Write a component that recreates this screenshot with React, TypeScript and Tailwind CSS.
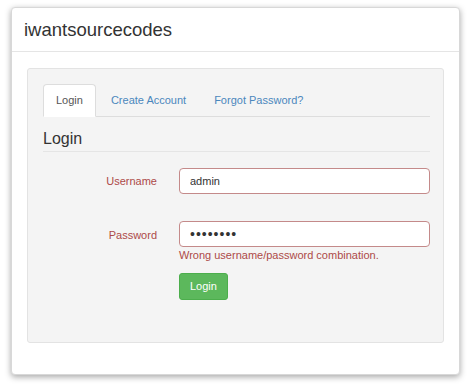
import { useState } from "react";

const tabs = ["Login", "Create Account", "Forgot Password?"];

export default function App() {
  const [active, setActive] = useState("Login");

  return (
    <div className="w-[474px] h-[390px] bg-white pt-[7px] pl-[11px] font-['Liberation_Sans',Arial,sans-serif]">
      <div className="w-[449px] h-[368px] bg-white rounded-[4px] border border-[#d8d8d8] shadow-[0_2px_6px_rgba(0,0,0,0.35)] flex flex-col">
        {/* header */}
        <div className="h-[44px] flex items-center px-[12px] border-b border-[#e5e5e5]">
          <h1 className="text-[18.5px] text-[#333]">iwantsourcecodes</h1>
        </div>

        {/* body */}
        <div className="pt-[16px] px-[15px]">
          <div className="h-[275px] bg-[#f4f4f4] border border-[#e3e3e3] rounded-[3px] pt-[15px] pl-[15px] pr-[13px]">
            {/* tabs */}
            <ul className="flex border-b border-[#ddd] text-[11px]">
              {tabs.map((t) => (
                <li key={t} className="mr-[2px] -mb-px">
                  <button
                    onClick={() => setActive(t)}
                    className={`h-[33px] px-[12px] rounded-t-[4px] border ${
                      active === t
                        ? "bg-white border-[#ddd] border-b-white text-[#555]"
                        : "border-transparent text-[#4b87bd]"
                    }`}
                  >
                    {t}
                  </button>
                </li>
              ))}
            </ul>

            {/* legend */}
            <h2 className="mt-[13px] pb-[3px] text-[16px] leading-[18px] text-[#333] border-b border-[#e5e5e5]">Login</h2>

            {/* form */}
            <form className="mt-[16px] flex flex-col text-[11px]" onSubmit={(e) => e.preventDefault()}>
              <div className="flex items-center">
                <label className="w-[114px] text-right text-[#ad4a48]">Username</label>
                <input
                  readOnly
                  value="admin"
                  className="ml-[22px] w-[251px] h-[26px] px-[10px] bg-white text-[#333] text-[11px] border border-[#c48a8a] rounded-[4px] outline-none"
                />
              </div>

              <div className="flex items-center mt-[27px]">
                <label className="w-[114px] text-right text-[#ad4a48] pt-[2px]">Password</label>
                <div className="ml-[22px] w-[251px] h-[26px] px-[10px] bg-white text-[#333] text-[14px] tracking-[1px] border border-[#c48a8a] rounded-[4px] flex items-center">
                  ••••••••
                </div>
              </div>

              <div className="ml-[136px] flex flex-col items-start">
                <span className="mt-[1px] leading-[14px] text-[#ad4a48]">Wrong username/password combination.</span>
                <button
                  type="submit"
                  className="mt-[11px] h-[27px] px-[10px] bg-[#5cb85c] border border-[#4cae4c] rounded-[3px] text-white text-[11px]"
                >
                  Login
                </button>
              </div>
            </form>
          </div>
        </div>
      </div>
    </div>
  );
}
